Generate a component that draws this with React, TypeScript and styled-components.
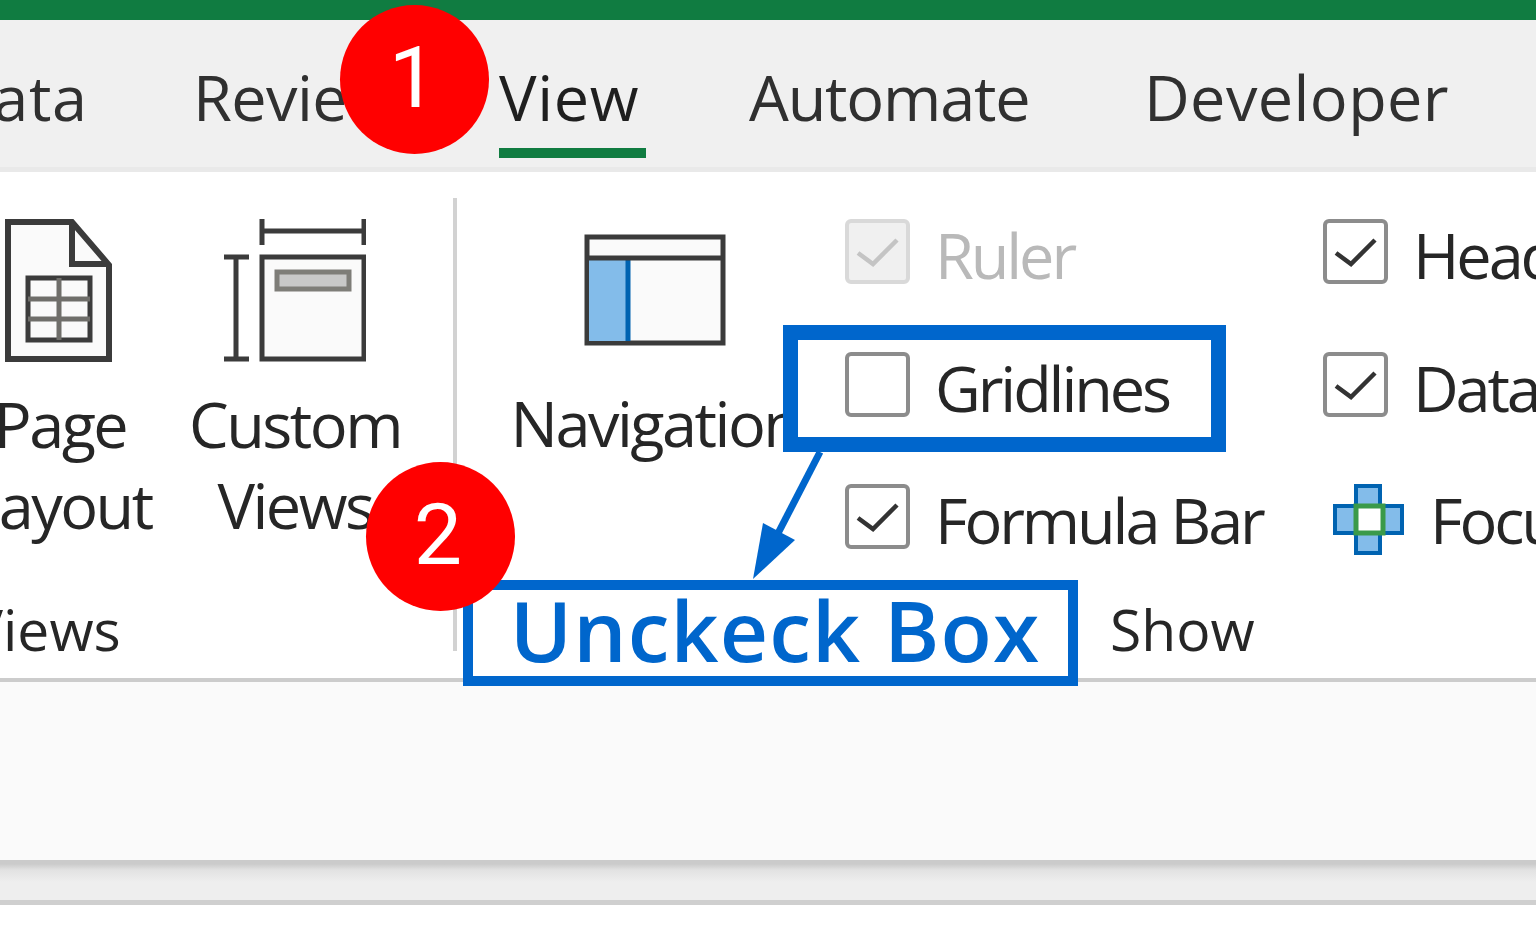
import styled, { createGlobalStyle } from "styled-components";

const GlobalStyle = createGlobalStyle`
    html, body {
        margin: 0;
        padding: 0;
        background: #ffffff;
        overflow: hidden;
    }
`;

const Page = styled.div`
    position: relative;
    width: 1536px;
    height: 946px;
    overflow: hidden;
    background: #ffffff;
    font-family: "Open Sans", "Liberation Sans", sans-serif;
    font-size: 63px;
    color: #262626;
    filter: blur(0.7px);
`;
const TitleBar = styled.div`
    height: 20px;
    background: #107c41;
`;
const TabBar = styled.div`
    display: flex;
    box-sizing: border-box;
    height: 152px;
    margin-left: -53px;
    background: #f0f0f0;
    border-bottom: 5px solid #e9e9e9;
`;
const Tab = styled.div<{ $width: number; $spacing: number; $active?: boolean }>`
    flex: none;
    width: ${(props) => props.$width}px;
    padding-top: 34px;
    line-height: 86px;
    white-space: nowrap;
    color: ${(props) => (props.$active ? "#1f1f1f" : "#303030")};
    letter-spacing: ${(props) => props.$spacing}px;
`;
const TabUnderline = styled.div`
    width: 147px;
    height: 10px;
    margin-top: 8px;
    background: #107c41;
`;
const Ribbon = styled.div`
    display: flex;
    box-sizing: border-box;
    height: 510px;
    background: #ffffff;
    border-bottom: 4px solid #cccccc;
`;
const ViewsGroup = styled.div`
    display: flex;
    flex-direction: column;
    flex: none;
    width: 453px;
    padding-top: 47px;
    box-sizing: border-box;
`;
const ButtonRow = styled.div`
    display: flex;
    gap: 35px;
    margin-left: -40px;
`;
const RibbonButton = styled.div<{ $iconShift?: number }>`
    display: flex;
    flex-direction: column;
    align-items: center;
    flex: none;
    width: 200px;
    svg {
        display: block;
        flex: none;
        margin-right: ${(props) => props.$iconShift ?? 0}px;
    }
`;
const ButtonLabel = styled.div<{ $gap: number }>`
    margin-top: ${(props) => props.$gap}px;
    line-height: 81px;
    text-align: center;
    white-space: nowrap;
    letter-spacing: -2.5px;
`;
const GroupLabel = styled.div<{ $left: number }>`
    margin-top: auto;
    margin-left: ${(props) => props.$left}px;
    padding-bottom: 8px;
    line-height: 81px;
    font-size: 57px;
    white-space: nowrap;
`;
const Separator = styled.div`
    flex: none;
    width: 4px;
    height: 453px;
    margin-top: 26px;
    background: #d2d2d2;
`;
const ShowGroup = styled.div`
    display: flex;
    flex-direction: column;
    flex: 1;
    min-width: 0;
`;
const ShowRow = styled.div`
    display: flex;
    flex: none;
    height: 414px;
`;
const NavButton = styled(RibbonButton)`
    width: 300px;
    margin-left: 48px;
    padding-top: 62px;
`;
const OptionColumn = styled.div<{ $width: number; $left: number }>`
    display: grid;
    grid-auto-rows: 132.5px;
    flex: none;
    width: ${(props) => props.$width}px;
    margin-left: ${(props) => props.$left}px;
    padding-top: 47px;
`;
const Option = styled.div<{ $disabled?: boolean }>`
    display: flex;
    align-items: flex-start;
    gap: 25px;
    white-space: nowrap;
    color: ${(props) => (props.$disabled ? "#b9b9b9" : "#262626")};
`;
const OptionText = styled.span`
    line-height: 81px;
    margin-top: -5px;
    letter-spacing: -3.1px;
`;
const Checkbox = styled.div<{ $disabled?: boolean }>`
    flex: none;
    box-sizing: border-box;
    width: 65px;
    height: 65px;
    border: 4px solid ${(props) => (props.$disabled ? "#d9d9d9" : "#8c8c8c")};
    border-radius: 6px;
    background: ${(props) => (props.$disabled ? "#f0f0f0" : "#ffffff")};
    svg {
        display: block;
    }
`;
const FocusOption = styled(Option)`
    gap: 26px;
    padding-left: 10px;
    svg {
        flex: none;
    }
`;
const Sheet = styled.div`
    height: 178px;
    background: #fafafa;
`;
const BottomBand = styled.div`
    box-sizing: border-box;
    height: 45px;
    background: linear-gradient(#cbcbcb 0, #cbcbcb 4px, #e2e2e2 10px, #eeeeee 22px, #eeeeee 100%);
    border-bottom: 5px solid #cfcfcf;
`;
const Badge = styled.div<{ $left: number; $top: number; $nudge: number }>`
    position: absolute;
    left: ${(props) => props.$left}px;
    top: ${(props) => props.$top}px;
    display: flex;
    align-items: center;
    justify-content: center;
    box-sizing: border-box;
    width: 149px;
    height: 149px;
    padding-bottom: 5px;
    padding-right: ${(props) => props.$nudge}px;
    border-radius: 50%;
    background: #ff0000;
    color: #ffffff;
    font-family: "Roboto", "Liberation Sans", sans-serif;
    font-size: 86px;
    font-weight: 400;
`;
const HighlightBox = styled.div`
    position: absolute;
    left: 783px;
    top: 325px;
    width: 443px;
    height: 127px;
    box-sizing: border-box;
    border: 15px solid #0066cc;
`;
const CalloutBox = styled.div`
    position: absolute;
    left: 463px;
    top: 580px;
    width: 615px;
    height: 106px;
    box-sizing: border-box;
    padding-left: 9px;
    border: 10px solid #0066cc;
    background: #ffffff;
    color: #0066cc;
    font-size: 84px;
    font-weight: 600;
    line-height: 79px;
    text-align: center;
    white-space: nowrap;
    letter-spacing: 1.1px;
`;
const ArrowLayer = styled.svg`
    position: absolute;
    left: 740px;
    top: 445px;
`;

const Ink = "#3b3b3b";

function PageIcon() {
    return (
        <svg width="107" height="143" viewBox="0 0 107 143">
            <path d="M3 3H67L104 46V140H3Z" fill="#fafafa" stroke={Ink} strokeWidth="6" />
            <path d="M67 3V45H104" fill="none" stroke={Ink} strokeWidth="6" />
            <rect x="23" y="59" width="62" height="62" fill="none" stroke={Ink} strokeWidth="5" />
            <path d="M54 59V121M23 80H85M23 100H85" stroke="#6f6e6a" strokeWidth="5" />
        </svg>
    );
}
function CustomIcon() {
    return (
        <svg width="142" height="143" viewBox="0 0 142 143">
            <path d="M38 0V26M140 0V26M38 12H140" fill="none" stroke={Ink} strokeWidth="5" />
            <path d="M0 38H25M12 38V140M0 140H25" fill="none" stroke={Ink} strokeWidth="5" />
            <rect x="38" y="38" width="102" height="102" fill="#fafafa" stroke={Ink} strokeWidth="5" />
            <rect x="53" y="53" width="72" height="17" fill="#c8c8c8" stroke="#7e7d78" strokeWidth="5" />
        </svg>
    );
}
function NavIcon() {
    return (
        <svg width="142" height="112" viewBox="0 0 142 112">
            <rect x="3" y="3" width="136" height="106" fill="#fafafa" stroke={Ink} strokeWidth="5" />
            <rect x="5" y="25" width="38" height="82" fill="#83bcea" />
            <path d="M44 25V107" stroke="#0063b1" strokeWidth="5" />
            <path d="M3 24H139" stroke={Ink} strokeWidth="5" />
        </svg>
    );
}
function FocusIcon() {
    return (
        <svg width="71" height="71" viewBox="0 0 71 71">
            <path
                d="M23 2H47V22H69V49H47V69H23V49H2V22H23Z"
                fill="#83bcea"
                stroke="#0063b1"
                strokeWidth="4"
            />
            <rect x="23" y="22" width="27" height="27" fill="#ffffff" stroke="#3a9a4a" strokeWidth="5" />
        </svg>
    );
}
function CheckMark({ color }: { color: string }) {
    return (
        <svg width="57" height="57" viewBox="0 0 57 57">
            <path d="M9 30L24 41L48 17" fill="none" stroke={color} strokeWidth="4.5" />
        </svg>
    );
}

export default function App() {
    return (
        <Page>
            <GlobalStyle />
            <TitleBar />
            <TabBar>
                <Tab $width={246} $spacing={0.6}>Data</Tab>
                <Tab $width={306} $spacing={-0.6}>Review</Tab>
                <Tab $width={250} $spacing={0.6} $active>
                    View
                    <TabUnderline />
                </Tab>
                <Tab $width={395} $spacing={-1.2}>Automate</Tab>
                <Tab $width={400} $spacing={0.4}>Developer</Tab>
            </TabBar>
            <Ribbon>
                <ViewsGroup>
                    <ButtonRow>
                        <RibbonButton $iconShift={4}>
                            <PageIcon />
                            <ButtonLabel $gap={21}>
                                Page
                                <br />
                                Layout
                            </ButtonLabel>
                        </RibbonButton>
                        <RibbonButton>
                            <CustomIcon />
                            <ButtonLabel $gap={21}>
                                Custom
                                <br />
                                Views
                            </ButtonLabel>
                        </RibbonButton>
                    </ButtonRow>
                    <GroupLabel $left={-31}>Views</GroupLabel>
                </ViewsGroup>
                <Separator />
                <ShowGroup>
                    <ShowRow>
                        <NavButton>
                            <NavIcon />
                            <ButtonLabel $gap={36}>Navigation</ButtonLabel>
                        </NavButton>
                        <OptionColumn $width={478} $left={40}>
                            <Option $disabled>
                                <Checkbox $disabled>
                                    <CheckMark color="#c4c4c4" />
                                </Checkbox>
                                <OptionText>Ruler</OptionText>
                            </Option>
                            <Option>
                                <Checkbox />
                                <OptionText>Gridlines</OptionText>
                            </Option>
                            <Option>
                                <Checkbox>
                                    <CheckMark color="#333333" />
                                </Checkbox>
                                <OptionText>Formula Bar</OptionText>
                            </Option>
                        </OptionColumn>
                        <OptionColumn $width={213} $left={0}>
                            <Option>
                                <Checkbox>
                                    <CheckMark color="#333333" />
                                </Checkbox>
                                <OptionText>Headings</OptionText>
                            </Option>
                            <Option>
                                <Checkbox>
                                    <CheckMark color="#333333" />
                                </Checkbox>
                                <OptionText>Data Labels</OptionText>
                            </Option>
                            <FocusOption>
                                <FocusIcon />
                                <OptionText>Focus Cell</OptionText>
                            </FocusOption>
                        </OptionColumn>
                    </ShowRow>
                    <GroupLabel $left={653}>Show</GroupLabel>
                </ShowGroup>
            </Ribbon>
            <Sheet />
            <BottomBand />

            <HighlightBox />
            <ArrowLayer width="90" height="140" viewBox="0 0 90 140">
                <path d="M80 7L32 100" fill="none" stroke="#0066cc" strokeWidth="7" />
                <path d="M13 134L55 95L23 78Z" fill="#0066cc" />
            </ArrowLayer>
            <CalloutBox>Unckeck Box</CalloutBox>
            <Badge $left={340} $top={5} $nudge={3}>1</Badge>
            <Badge $left={366} $top={462} $nudge={5}>2</Badge>
        </Page>
    );
}
